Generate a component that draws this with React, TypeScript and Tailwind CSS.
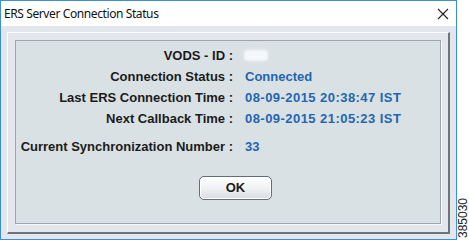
import React from "react";

const rows = [
  { label: "VODS - ID :", value: null },
  { label: "Connection Status :", value: "Connected" },
  { label: "Last ERS Connection Time :", value: "08-09-2015 20:38:47 IST" },
  { label: "Next Callback Time :", value: "08-09-2015 21:05:23 IST" },
];

function Row({ label, value }: { label: string; value: string | null }) {
  const isTime = value !== null && /\d{2}-\d{2}/.test(value);
  return (
    <div className="flex h-[21px] items-center">
      <div className="w-[217px] text-right text-[#1b1b1b]">{label}</div>
      <div className={`ml-[12px] text-[#2266b0] ${isTime ? "tracking-[0.45px]" : ""}`}>
        {value ?? (
          // redacted id
          <div className="h-[9px] w-[22px] rounded-[2px] bg-[#f4f7f9] shadow-[0_0_3px_1px_rgba(245,248,250,0.9)]" />
        )}
      </div>
    </div>
  );
}

export default function App() {
  return (
    <div className="flex h-[240px] w-[469px] bg-white">
      {/* dialog window */}
      <div className="flex h-[240px] w-[458px] flex-col border border-[#3d8fd6] bg-[#e3e7ed]">
        <div className="flex h-[25px] items-center justify-between bg-white pl-[3px] pr-[7px]">
          <span className="font-['Noto_Sans',sans-serif] text-[12px] tracking-[-0.4px] text-[#111]">
            ERS Server Connection Status
          </span>
          <svg width="12" height="12" viewBox="0 0 12 12">
            <path d="M1 1L11 11M11 1L1 11" stroke="#222" strokeWidth="1.1" />
          </svg>
        </div>

        <div className="flex-1 px-[6px] pt-[6px] pb-[5px]">
          {/* raised outer panel */}
          <div className="h-full border-t border-l border-t-white border-l-white border-b-2 border-r-2 border-b-[#6f7478] border-r-[#6f7478] px-[7px] pt-[7px] pb-[8px]">
            {/* inset content panel */}
            <div className="flex h-full flex-col border border-[#9ea6ab] bg-[#dae1e4] pt-[4px] font-['Liberation_Sans',Arial,sans-serif] text-[13px] font-bold shadow-[1px_1px_0_#f7f9fa]">
              {rows.map((r) => (
                <Row key={r.label} label={r.label} value={r.value} />
              ))}
              <div className="mt-[7px]">
                <Row label="Current Synchronization Number :" value="33" />
              </div>
              <div className="mt-[19px] pl-[183px]">
                <button
                  type="button"
                  className="h-[24px] w-[73px] rounded-[5px] border border-[#5d6f80] bg-gradient-to-b from-white via-[#f1f2f4] to-[#d9dde2] text-[13px] font-bold text-[#1b1b1b] shadow-[inset_0_0_0_1px_#ffffff]"
                >
                  OK
                </button>
              </div>
            </div>
          </div>
        </div>
      </div>

      {/* figure number */}
      <div className="flex flex-1 items-end justify-center pb-[2px]">
        <span className="rotate-180 font-['Liberation_Sans',Arial,sans-serif] text-[12px] leading-none text-[#222] [writing-mode:vertical-rl]">
          385030
        </span>
      </div>
    </div>
  );
}
